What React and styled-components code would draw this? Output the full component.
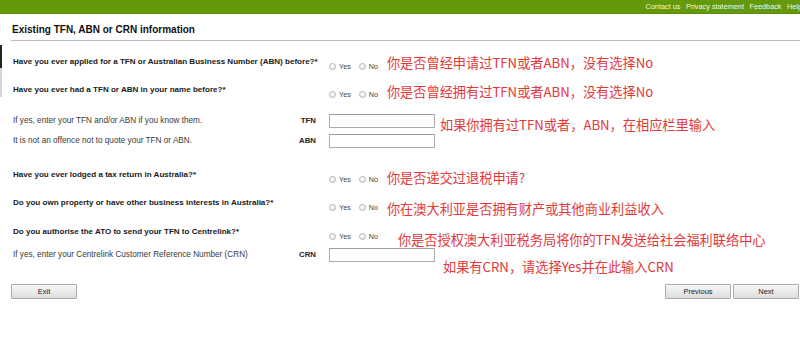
import React from 'react';
import styled, { createGlobalStyle } from 'styled-components';

const GlobalStyle = createGlobalStyle`
  body {
    margin: 0;
    background: #ffffff;
    overflow: hidden;
    font-family: "Liberation Sans", Arial, sans-serif;
  }
`

const Page = styled.div`
  width: 812px;
  height: 348px;
  background: #ffffff;
`

const TopBar = styled.div`
  display: flex;
  justify-content: flex-end;
  align-items: center;
  gap: 5.5px;
  height: 14px;
  padding-right: 10px;
  background: #63990a;
  border-bottom: 1px solid #5a8c06;
  box-sizing: border-box;
`

const NavLink = styled.a`
  font-size: 7.3px;
  color: #f3f7e6;
  text-decoration: none;
  white-space: nowrap;
`

const Title = styled.h1`
  margin: 9px 0 0 11px;
  padding: 0 0 3px 1px;
  font-size: 10px;
  line-height: 14px;
  font-weight: bold;
  color: #111;
  border-bottom: 1px solid #bdbdbd;
`

const Form = styled.div`
  padding-top: 15px;
`

const Row = styled.div`
  position: relative;
  display: grid;
  grid-template-columns: 283px 20px max-content 1fr;
  align-items: start;
  height: ${p => p.$h}px;
  padding-left: 13px;

  ${p => p.$marked && `
    &::before, &::after {
      content: "";
      position: absolute;
      left: 0;
      width: 2px;
    }
    &::before { top: -11px; height: 23px; background: #222; }
    &::after { top: 12px; height: 29px; background: #d6d6d6; }
  `}
`

const Question = styled.div`
  font-size: ${p => (p.$plain ? 8.2 : 8.05)}px;
  line-height: 12px;
  font-weight: ${p => (p.$plain ? 'normal' : 'bold')};
  color: ${p => (p.$plain ? '#3a3a3a' : '#1a1a1a')};
  white-space: nowrap;
`

const FieldLabel = styled.div`
  justify-self: end;
  font-size: 7.8px;
  line-height: 12px;
  font-weight: bold;
  color: #222;
  white-space: nowrap;
`

const Radios = styled.div`
  display: flex;
  align-items: center;
  height: 12px;
  margin: 4px 0 0 13px;
`

const Radio = styled.input.attrs({ type: 'radio' })`
  appearance: none;
  width: 7px;
  height: 7px;
  margin: 0 3px 0 ${p => (p.$first ? 0 : 8)}px;
  border: 1px solid #b4b4b4;
  border-radius: 50%;
  background: radial-gradient(circle at 40% 35%, #ffffff, #e2e2e2);
  box-sizing: border-box;
`

const RadioText = styled.span`
  font-size: 7.2px;
  color: #444;
`

const TextBox = styled.input.attrs({ type: 'text' })`
  width: 106px;
  height: 14px;
  margin: -1px 0 0 13px;
  padding: 0;
  border: 1px solid #abadb3;
  border-top-color: #9a9da5;
  box-sizing: border-box;
  background: #fff;
`

const Note = styled.div`
  margin: ${p => p.$top || 0}px 0 0 ${p => p.$left || 9}px;
  font-family: "Noto Sans CJK SC", "Liberation Sans", sans-serif;
  font-size: 13.2px;
  line-height: 16px;
  color: #e2383a;
  white-space: nowrap;
`

const Footer = styled.div`
  display: flex;
  justify-content: space-between;
  padding: 0 13px 0 11px;
`

const ButtonGroup = styled.div`
  display: flex;
  gap: 2px;
`

const Button = styled.button`
  width: 66px;
  height: 15px;
  padding: 0;
  font-family: "Liberation Sans", Arial, sans-serif;
  font-size: 7.5px;
  color: #222;
  background: linear-gradient(#f7f7f7, #dddddd);
  border: 1px solid #acacac;
  border-radius: 1px;
`

const YesNo = ({ name }) => (
  <Radios>
    <Radio $first name={name} />
    <RadioText>Yes</RadioText>
    <Radio name={name} />
    <RadioText>No</RadioText>
  </Radios>
)

const App = () => {
  return (
    <Page>
      <GlobalStyle />
      <TopBar>
        <NavLink>Contact us</NavLink>
        <NavLink>Privacy statement</NavLink>
        <NavLink>Feedback</NavLink>
        <NavLink>Help</NavLink>
      </TopBar>
      <Title>Existing TFN, ABN or CRN information</Title>
      <Form>
        <Row $h={28} $marked>
          <Question>Have you ever applied for a TFN or Australian Business Number (ABN) before?*</Question>
          <FieldLabel />
          <YesNo name="q1" />
          <Note $top={-1}>你是否曾经申请过TFN或者ABN，没有选择No</Note>
        </Row>
        <Row $h={31}>
          <Question>Have you ever had a TFN or ABN in your name before?*</Question>
          <FieldLabel />
          <YesNo name="q2" />
          <Note>你是否曾经拥有过TFN或者ABN，没有选择No</Note>
        </Row>
        <Row $h={20}>
          <Question $plain>If yes, enter your TFN and/or ABN if you know them.</Question>
          <FieldLabel>TFN</FieldLabel>
          <TextBox />
          <Note $top={2} $left={5}>如果你拥有过TFN或者，ABN，在相应栏里输入</Note>
        </Row>
        <Row $h={34}>
          <Question $plain>It is not an offence not to quote your TFN or ABN.</Question>
          <FieldLabel>ABN</FieldLabel>
          <TextBox />
        </Row>
        <Row $h={28}>
          <Question>Have you ever lodged a tax return in Australia?*</Question>
          <FieldLabel />
          <YesNo name="q3" />
          <Note $top={1}>你是否递交过退税申请?</Note>
        </Row>
        <Row $h={29}>
          <Question>Do you own property or have other business interests in Australia?*</Question>
          <FieldLabel />
          <YesNo name="q4" />
          <Note $top={4}>你在澳大利亚是否拥有财产或其他商业利益收入</Note>
        </Row>
        <Row $h={23}>
          <Question>Do you authorise the ATO to send your TFN to Centrelink?*</Question>
          <FieldLabel />
          <YesNo name="q5" />
          <Note $top={6} $left={20}>你是否授权澳大利亚税务局将你的TFN发送给社会福利联络中心</Note>
        </Row>
        <Row $h={35}>
          <Question $plain>If yes, enter your Centrelink Customer Reference Number (CRN)</Question>
          <FieldLabel>CRN</FieldLabel>
          <TextBox />
          <Note $top={10} $left={8}>如果有CRN，请选择Yes并在此输入CRN</Note>
        </Row>
      </Form>
      <Footer>
        <Button>Exit</Button>
        <ButtonGroup>
          <Button>Previous</Button>
          <Button>Next</Button>
        </ButtonGroup>
      </Footer>
    </Page>
  )
}

export default App;
